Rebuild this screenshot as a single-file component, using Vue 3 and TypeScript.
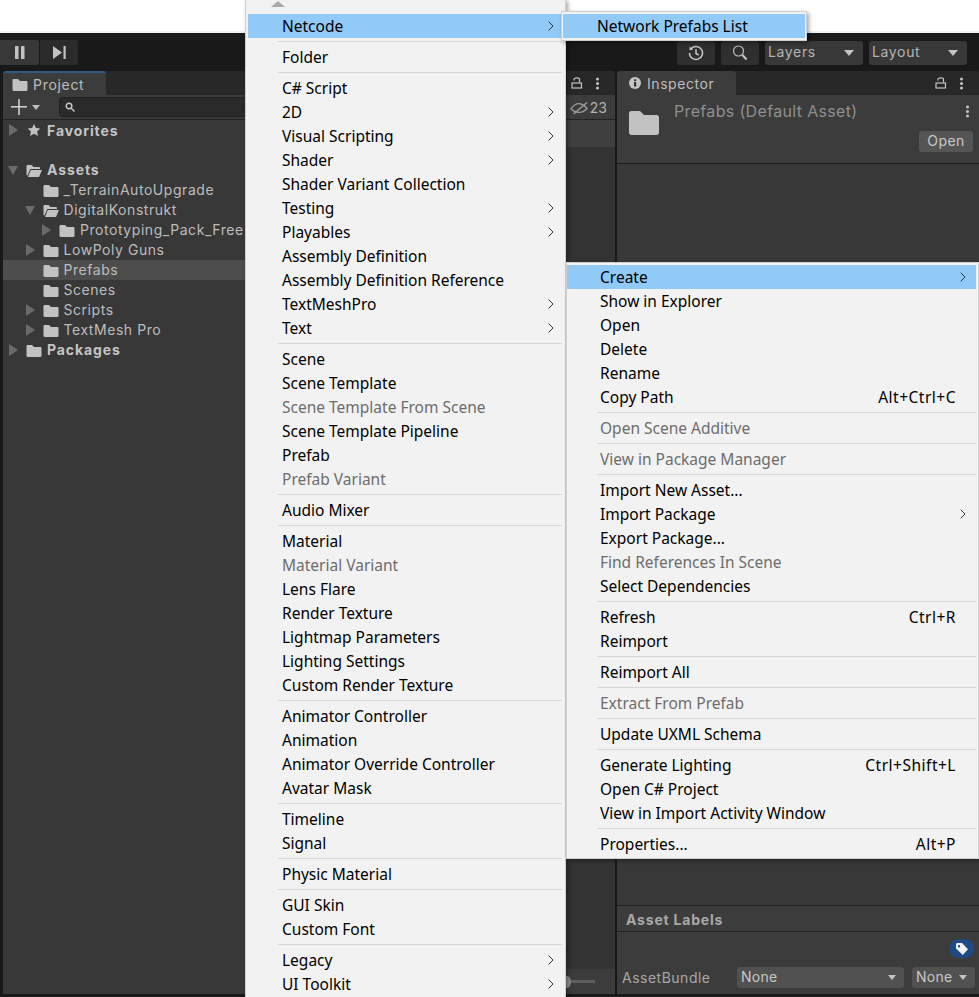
<script setup lang="ts">
/** Unity editor with the Create > Netcode context menu open. */
type MenuRow = { label?: string; sub?: boolean; off?: boolean; keys?: string; on?: boolean; sep?: boolean };
type TreeRow = { name: string; depth: number; arrow?: "right" | "down"; icon: "folder" | "open" | "star"; bold?: boolean; selected?: boolean; gap?: boolean };

const sep: MenuRow = { sep: true };
const item = (label: string, sub = false): MenuRow => ({ label, sub });
const off = (label: string): MenuRow => ({ label, off: true });
const key = (label: string, keys: string): MenuRow => ({ label, keys });

const createMenu: MenuRow[] = [
  { label: "Netcode", sub: true, on: true }, sep,
  item("Folder"), sep,
  item("C# Script"), item("2D", true), item("Visual Scripting", true), item("Shader", true),
  item("Shader Variant Collection"), item("Testing", true), item("Playables", true),
  item("Assembly Definition"), item("Assembly Definition Reference"), item("TextMeshPro", true), item("Text", true), sep,
  item("Scene"), item("Scene Template"), off("Scene Template From Scene"), item("Scene Template Pipeline"),
  item("Prefab"), off("Prefab Variant"), sep,
  item("Audio Mixer"), sep,
  item("Material"), off("Material Variant"), item("Lens Flare"), item("Render Texture"),
  item("Lightmap Parameters"), item("Lighting Settings"), item("Custom Render Texture"), sep,
  item("Animator Controller"), item("Animation"), item("Animator Override Controller"), item("Avatar Mask"), sep,
  item("Timeline"), item("Signal"), sep,
  item("Physic Material"), sep,
  item("GUI Skin"), item("Custom Font"), sep,
  item("Legacy", true), item("UI Toolkit", true),
];

const assetMenu: MenuRow[] = [
  { label: "Create", sub: true, on: true },
  item("Show in Explorer"), item("Open"), item("Delete"), item("Rename"), key("Copy Path", "Alt+Ctrl+C"), sep,
  off("Open Scene Additive"), sep,
  off("View in Package Manager"), sep,
  item("Import New Asset..."), item("Import Package", true), item("Export Package..."),
  off("Find References In Scene"), item("Select Dependencies"), sep,
  key("Refresh", "Ctrl+R"), item("Reimport"), sep,
  item("Reimport All"), sep,
  off("Extract From Prefab"), sep,
  item("Update UXML Schema"), sep,
  key("Generate Lighting", "Ctrl+Shift+L"), item("Open C# Project"), item("View in Import Activity Window"), sep,
  key("Properties...", "Alt+P"),
];

const tree: TreeRow[] = [
  { name: "Favorites", depth: 0, arrow: "right", icon: "star", bold: true, gap: true },
  { name: "Assets", depth: 0, arrow: "down", icon: "open", bold: true },
  { name: "_TerrainAutoUpgrade", depth: 1, icon: "folder" },
  { name: "DigitalKonstrukt", depth: 1, arrow: "down", icon: "open" },
  { name: "Prototyping_Pack_Free", depth: 2, arrow: "right", icon: "folder" },
  { name: "LowPoly Guns", depth: 1, arrow: "right", icon: "folder" },
  { name: "Prefabs", depth: 1, icon: "folder", selected: true },
  { name: "Scenes", depth: 1, icon: "folder" },
  { name: "Scripts", depth: 1, arrow: "right", icon: "folder" },
  { name: "TextMesh Pro", depth: 1, arrow: "right", icon: "folder" },
  { name: "Packages", depth: 0, arrow: "right", icon: "folder", bold: true },
];

const folderPath = "M.5 4.2C.5 3.5 1 3 1.700 3H6l2 2h6.300c.7 0 1.200.5 1.200 1.200v7.600c0 .7-.5 1.200-1.200 1.200H1.700C1 15 .5 14.500.5 13.800z";
const openPath = "M.5 4.200C.5 3.500 1 3 1.700 3H5.500l2 2h5.300c.7 0 1.200.5 1.200 1.200V7H4.300L1.500 13.500H1.400C.9 13.500.5 13.100.5 12.500zM4.800 8H16l-3 7H2z";
const starPath = "M8 2l1.900 4 4.400.5-3.200 3 .9 4.500L8 11.800 4 14l.9-4.500-3.200-3L6.100 6z";
const lockShackle = "M3 3.500V2.200C3 .5 8.500 .5 8.500 2.200V5.500";
</script>

<template>
  <div class="editor">
    <div class="top-strip"></div>

    <div class="toolbar">
      <div class="play-group">
        <button class="play-btn pause">
          <svg width="12" height="13" viewBox="0 0 12 13" fill="#c2c2c2"><rect x="1" y="0" width="3.500" height="13" rx=".5"/><rect x="7" y="0" width="3.500" height="13" rx=".5"/></svg>
        </button>
        <button class="play-btn step">
          <svg width="13" height="13" viewBox="0 0 13 13" fill="#c2c2c2"><path d="M0 0l9 6.500L0 13z"/><rect x="10.500" y="0" width="2.200" height="13"/></svg>
        </button>
      </div>
      <div class="tool-right">
        <button class="tool-btn icon-btn">
          <svg width="16" height="16" viewBox="0 0 16 16" fill="none" stroke="#c8c8c8" stroke-width="1.500"><path d="M2.700 4.200A6.500 6.500 0 1 1 1.500 8"/><path d="M8 4.300V8.500l2.600 1.500"/><path d="M1.500 1.500v3.500h3.500" fill="#c8c8c8" stroke="none"/></svg>
        </button>
        <button class="tool-btn icon-btn">
          <svg width="16" height="16" viewBox="0 0 16 16" fill="none" stroke="#c8c8c8" stroke-width="1.100"><circle cx="6.500" cy="6" r="5"/><path d="M10.500 10l4 4.500" stroke-width="2"/></svg>
        </button>
        <button class="tool-btn drop"><span>Layers</span><i class="caret"></i></button>
        <button class="tool-btn drop"><span>Layout</span><i class="caret"></i></button>
      </div>
    </div>

    <div class="workspace">
      <section class="panel project">
        <div class="tab-strip">
          <div class="tab project-tab">
            <svg width="16" height="16" viewBox="0 0 16 16" fill="#c2c2c2"><path :d="folderPath"/></svg>
            <span>Project</span>
          </div>
          <div class="strip-tools">
            <svg width="12" height="12" viewBox="0 0 12 12" fill="none" stroke="#c4c4c4" stroke-width="1.200"><path :d="lockShackle"/><rect x="1" y="6" width="9.500" height="5"/></svg>
            <i class="kebab"></i>
          </div>
        </div>
        <div class="project-bar">
          <svg class="plus" width="16" height="16" viewBox="0 0 16 16" fill="#d0d0d0"><rect y="7" width="16" height="1.600"/><rect x="7.200" width="1.600" height="16"/></svg>
          <i class="caret small"></i>
          <div class="search">
            <svg width="10" height="10" viewBox="0 0 10 10" fill="none" stroke="#c8c8c8" stroke-width="1.400"><circle cx="4" cy="4" r="2.800"/><path d="M6 6l3.500 3.500"/></svg>
          </div>
          <div class="eye-count">
            <svg width="19" height="14" viewBox="0 0 19 14" fill="none" stroke="#9a9a9a" stroke-width="1.400"><path d="M1 8C4 3.500 8 2 11 3s4.500 2.500 6 4.500c-2.500 3-6.500 4.500-10.500 3.500C4.500 10.500 2.500 9.500 1 8z"/><path d="M3.500 13L17 1.500" stroke-width="1.600"/></svg>
            <span>23</span>
          </div>
        </div>
        <div class="project-body">
          <div class="tree">
            <div v-for="row in tree" :key="row.name" class="tree-row"
              :class="{ selected: row.selected, bold: row.bold, gap: row.gap }"
              :style="{ paddingLeft: 6 + row.depth * 16.5 + 'px' }">
              <span class="arrow-box"><i v-if="row.arrow" :class="'tri-' + row.arrow"></i></span>
              <svg class="tree-icon" width="16" height="16" viewBox="0 0 16 16" fill="#c2c2c2">
                <path :d="row.icon === 'star' ? starPath : row.icon === 'open' ? openPath : folderPath"/>
              </svg>
              <span class="tree-name">{{ row.name }}</span>
            </div>
          </div>
          <div class="assets">
            <div class="crumb"></div>
            <div class="asset-space"></div>
            <div class="asset-foot"><i class="slider-knob"></i><i class="slider-rail"></i></div>
          </div>
        </div>
      </section>

      <section class="panel inspector">
        <div class="tab-strip">
          <div class="tab inspector-tab">
            <svg width="12" height="12" viewBox="0 0 12 12"><circle cx="6" cy="6" r="6" fill="#c4c4c4"/><rect x="5" y="5" width="2.200" height="4.500" fill="#333"/><rect x="5" y="2.300" width="2.200" height="1.800" fill="#333"/></svg>
            <span>Inspector</span>
          </div>
          <div class="strip-tools">
            <svg width="12" height="12" viewBox="0 0 12 12" fill="none" stroke="#c4c4c4" stroke-width="1.200"><path :d="lockShackle"/><rect x="1" y="6" width="9.500" height="5"/></svg>
            <i class="kebab"></i>
          </div>
        </div>
        <div class="asset-head">
          <svg class="big-folder" width="32" height="32" viewBox="0 0 16 16" fill="#c2c2c2"><path :d="folderPath"/></svg>
          <div class="asset-title">Prefabs (Default Asset)</div>
          <i class="kebab head-kebab"></i>
          <button class="open-btn">Open</button>
        </div>
        <div class="inspector-space"></div>
        <div class="labels-head">Asset Labels</div>
        <div class="labels-body">
          <div class="tag-row">
            <span class="tag-pill">
              <svg width="14" height="14" viewBox="0 0 14 14" fill="#f2f2f2"><path d="M1 2.500C1 1.700 1.700 1 2.500 1H7l6 6.200L7.800 13 1 6.500zM4 3a1.200 1.200 0 1 0 0 2.400A1.200 1.200 0 0 0 4 3z" fill-rule="evenodd"/></svg>
            </span>
          </div>
          <div class="bundle-row">
            <span class="bundle-label">AssetBundle</span>
            <button class="bundle-drop wide"><span>None</span><i class="caret"></i></button>
            <button class="bundle-drop"><span>None</span><i class="caret"></i></button>
          </div>
        </div>
      </section>
    </div>

    <!-- create submenu, clipped by the window -->
    <div class="menu create-menu">
      <i class="scroll-up"></i>
      <template v-for="(row, i) in createMenu" :key="i">
        <div v-if="row.sep" class="menu-sep"></div>
        <div v-else class="menu-row" :class="{ on: row.on, off: row.off }">
          <span>{{ row.label }}</span>
          <svg v-if="row.sub" class="chev" width="6" height="10" viewBox="0 0 6 10" fill="none" stroke="#333" stroke-width="1"><path d="M.7.7L5 5 .7 9.300"/></svg>
        </div>
      </template>
    </div>

    <div class="menu netcode-menu">
      <div class="menu-row on"><span>Network Prefabs List</span></div>
    </div>

    <div class="menu asset-menu">
      <template v-for="(row, i) in assetMenu" :key="i">
        <div v-if="row.sep" class="menu-sep"></div>
        <div v-else class="menu-row" :class="{ on: row.on, off: row.off }">
          <span>{{ row.label }}</span>
          <span v-if="row.keys" class="keys">{{ row.keys }}</span>
          <svg v-if="row.sub" class="chev" width="6" height="10" viewBox="0 0 6 10" fill="none" stroke="#333" stroke-width="1"><path d="M.7.7L5 5 .7 9.300"/></svg>
        </div>
      </template>
    </div>
  </div>
</template>

<style>
html, body { margin: 0; background: #fff; overflow: hidden; }
</style>

<style scoped>
.editor {
  position: relative;
  width: 979px;
  height: 997px;
  overflow: hidden;
  display: flex;
  flex-direction: column;
  background: #191919;
  font-family: Inter, "Liberation Sans", sans-serif;
  font-size: 14px;
  color: #bdbdbd;
}
button { font: inherit; color: inherit; border: 0; padding: 0; }
i { display: block; }

.top-strip {
  height: 31px;
  flex: none;
  background: #fff;
  border-bottom: 2px solid #f0f0f0;
}

.toolbar {
  height: 38px;
  flex: none;
  display: flex;
  align-items: center;
  justify-content: space-between;
  box-sizing: border-box;
  padding-top: 1px;
}
.play-group { display: flex; gap: 1px; }
.play-btn { height: 25px; display: flex; align-items: center; justify-content: center; border-radius: 0 2px 2px 0; }
.play-btn.pause { width: 39px; background: #383838; }
.play-btn.step { width: 38px; background: #2b2b2b; }
.tool-right { display: flex; gap: 6px; padding-right: 12px; }
.tool-btn { height: 24px; background: #2f2f2f; border-radius: 3px; display: flex; align-items: center; justify-content: center; }
.icon-btn { width: 38px; }
.drop { width: 98px; justify-content: space-between; padding: 0 9px 2px 3px; background: #383838; color: #b4b4b4; letter-spacing: .65px; }
.drop .caret { margin-top: 2px; }

.caret { width: 0; height: 0; border-left: 5px solid transparent; border-right: 5px solid transparent; border-top: 6px solid #c4c4c4; }
.caret.small { border-left-width: 4.500px; border-right-width: 4.500px; border-top-width: 5px; border-top-color: #bdbdbd; margin-left: 5px; }

.workspace { flex: 1; min-height: 0; display: flex; gap: 2px; padding: 0 0 3px 3px; }
.panel { display: flex; flex-direction: column; background: #383838; overflow: hidden; border-radius: 3px 3px 0 0; }
.project { width: 612px; flex: none; }
.inspector { flex: 1; }

.tab-strip { height: 24px; flex: none; background: #282828; display: flex; align-items: stretch; justify-content: space-between; }
.tab { display: flex; align-items: center; background: #3c3c3c; box-sizing: border-box; border-radius: 3px 3px 0 0; }
.project-tab { width: 103px; padding-left: 9px; gap: 5px; border-top: 2px solid #2c5d87; letter-spacing: .7px; }
.inspector-tab { width: 119px; padding-left: 12px; gap: 6px; letter-spacing: .55px; }
.strip-tools { display: flex; align-items: center; gap: 13px; padding-right: 16px; }
.kebab { width: 3px; height: 3px; border-radius: 50%; background: #c4c4c4; box-shadow: 0 -4.500px 0 #c4c4c4, 0 4.500px 0 #c4c4c4; }

.project-bar { height: 25px; flex: none; box-sizing: border-box; display: flex; align-items: center; background: #3c3c3c; border-bottom: 1px solid #232323; padding-left: 8px; position: relative; }
.plus { flex: none; }
.search { width: 490px; height: 20px; margin-left: 19px; box-sizing: border-box; background: #2a2a2a; border: 1px solid #212121; border-radius: 4px; display: flex; align-items: center; padding-left: 5px; }
.eye-count { position: absolute; right: 8px; top: 4px; display: flex; align-items: center; gap: 1px; color: #b4b4b4; }

.project-body { flex: 1; min-height: 0; display: flex; }
.tree { width: 560px; flex: none; padding: 0; }
.tree-row { height: 20px; display: flex; align-items: center; letter-spacing: .55px; white-space: nowrap; }
.tree-name { margin-top: -2px; }
.tree-row.gap { margin-bottom: 20px; }
.tree-row.gap .tree-name { margin-top: 0; }
.tree-row.bold { font-weight: 700; color: #c4c4c4; letter-spacing: .9px; }
.tree-row.selected { background: #4d4d4d; }
.arrow-box { width: 17px; flex: none; display: flex; align-items: center; }
.tree-icon { flex: none; margin-right: 5px; }
.tri-right { width: 0; height: 0; border-left: 9px solid #6b6b6b; border-top: 6px solid transparent; border-bottom: 6px solid transparent; }
.tri-down { width: 0; height: 0; margin-left: -1px; border-top: 9px solid #6b6b6b; border-left: 5.500px solid transparent; border-right: 5.500px solid transparent; }

.assets { flex: 1; display: flex; flex-direction: column; background: #333; }
.crumb { height: 27px; flex: none; background: #3f3f3f; }
.asset-space { flex: 1; }
.asset-foot { height: 25px; flex: none; background: #3c3c3c; display: flex; align-items: center; padding-left: 6px; position: relative; }
.slider-knob { width: 8px; height: 12px; border-radius: 50%; background: #8c8c8c; margin-left: -6px; }
.slider-rail { width: 24px; height: 3px; background: #5e5e5e; }

.asset-head { height: 69px; flex: none; box-sizing: border-box; background: #3c3c3c; border-bottom: 1px solid #1f1f1f; position: relative; padding-left: 57px; }
.big-folder { position: absolute; left: 11px; top: 10px; }
.asset-title { padding-top: 6px; font-size: 16px; letter-spacing: .34px; color: #8f8f8f; }
.head-kebab { position: absolute; right: 10px; top: 15px; }
.open-btn { position: absolute; right: 6px; top: 36px; width: 54px; height: 21px; background: #555; border-radius: 3px; color: #c8c8c8; letter-spacing: .4px; padding-bottom: 3px; }

.inspector-space { flex: 1; }
.labels-head { height: 27px; flex: none; box-sizing: border-box; border-top: 1px solid #232323; border-bottom: 1px solid #232323; background: #3c3c3c; padding: 5px 0 0 9px; font-weight: 700; letter-spacing: .8px; color: #a8a8a8; }
.labels-body { height: 62px; flex: none; background: #3c3c3c; }
.tag-row { height: 35px; display: flex; justify-content: flex-end; padding: 7px 5px 0 0; box-sizing: border-box; }
.tag-pill { width: 25px; height: 19px; border-radius: 10px; background: #1f4a85; display: flex; align-items: center; justify-content: center; }
.bundle-row { display: flex; align-items: center; gap: 8px; padding-left: 5px; }
.bundle-label { width: 107px; color: #a8a8a8; letter-spacing: .5px; }
.bundle-drop { width: 63px; height: 21px; background: #515151; border-radius: 3px; display: flex; align-items: center; justify-content: space-between; padding: 0 8px 2px 4px; color: #c8c8c8; box-sizing: border-box; letter-spacing: .3px; }
.bundle-drop.wide { width: 167px; }
.bundle-drop .caret { margin-top: 2px; border-left-width: 4.500px; border-right-width: 4.500px; border-top-width: 5px; }

/* native popup menus */
.menu {
  position: absolute;
  box-sizing: border-box;
  background: #f2f2f2;
  color: #000;
  font-family: "Noto Sans", "Liberation Sans", sans-serif;
  font-size: 15.500px;
  border: 1px solid #cfcfcf;
  box-shadow: 2px 2px 4px rgba(0, 0, 0, .35);
}
.create-menu { left: 245px; top: -1px; width: 321px; height: 999px; padding: 14px 3px 0 2px; overflow: hidden; }
.netcode-menu { left: 561px; top: 11px; width: 246px; height: 30px; padding: 2px 1px; border-width: 1px; }
.asset-menu { left: 566px; top: 262px; width: 413px; padding: 2px 2px 2px 0; }

.menu-row { height: 24px; box-sizing: border-box; position: relative; display: flex; align-items: center; justify-content: space-between; padding-left: 34px; white-space: nowrap; }
.asset-menu .menu-row { padding-left: 33px; padding-right: 20px; }
.netcode-menu .menu-row { padding-left: 34px; }
.menu-row.on { background: #91c9f7; }
.menu-row.off { color: #6d6d6d; }
.keys { letter-spacing: .5px; }
.chev { position: absolute; right: 10px; top: 7px; }
.create-menu .chev { right: 8px; }
.menu-sep { height: 7px; position: relative; }
.menu-sep::after { content: ""; position: absolute; left: 30px; right: 0; top: 3px; height: 1px; background: #d7d7d7; }

.scroll-up { position: absolute; left: 25px; top: 1px; width: 0; height: 0; border-left: 7px solid transparent; border-right: 7px solid transparent; border-bottom: 6px solid #a9a9a9; }
</style>
